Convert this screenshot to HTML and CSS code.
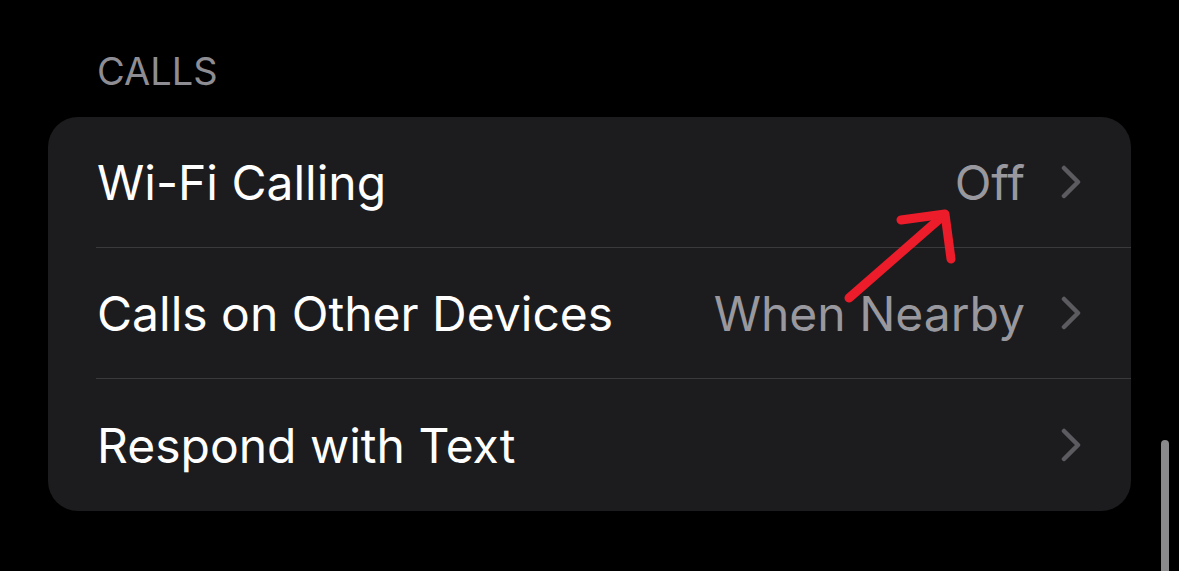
FILE: index.html
```html
<!DOCTYPE html>
<html lang="en">
<head>
  <meta charset="UTF-8" />
  <title>Phone — Calls</title>
  <link rel="stylesheet" href="styles.css">
</head>
<body>

<div class="screen">
  <div class="section-title">CALLS</div>

  <div class="group">
    <div class="row">
      <div class="row-inner">
        <span class="label">Wi-Fi Calling</span>
        <span class="value">Off</span>
        <svg class="chevron" viewBox="0 0 20 34"><path d="M3 3 L17 17 L3 31" /></svg>
      </div>
    </div>
    <div class="row">
      <div class="row-inner">
        <span class="label">Calls on Other Devices</span>
        <span class="value">When Nearby</span>
        <svg class="chevron" viewBox="0 0 20 34"><path d="M3 3 L17 17 L3 31" /></svg>
      </div>
    </div>
    <div class="row">
      <div class="row-inner">
        <span class="label">Respond with Text</span>
        <svg class="chevron" viewBox="0 0 20 34"><path d="M3 3 L17 17 L3 31" /></svg>
      </div>
    </div>
  </div>
</div>

<!-- annotation arrow pointing at "Off" -->
<svg class="arrow" viewBox="0 0 1179 571">
  <path d="M849 298 L944 215" />
  <path d="M901 220 L945 214 L951 259" />
</svg>

<div class="scrollbar"></div>

</body>
</html>
```

FILE: styles.css
```css
html, body {
  margin: 0;
  padding: 0;
  overflow: hidden;
  background: #000;
  font-family: Inter, "Noto Sans", sans-serif;
}
.screen {
  width: 1179px;
  height: 571px;
  padding: 0 48px;
  box-sizing: border-box;
}
.section-title {
  padding: 51px 0 0 49px;
  height: 117px;
  box-sizing: border-box;
  font-size: 38px;
  line-height: 40px;
  color: #8d8d93;
}
.group {
  background: #1c1c1e;
  border-radius: 30px;
  overflow: hidden;
}
.row {
  padding-left: 48px;
}
.row-inner {
  display: flex;
  align-items: center;
  height: 130px;
  padding-right: 50px;
  border-bottom: 1px solid #3a3a3c;
}
.row:last-child .row-inner {
  height: 132px;
  border-bottom: none;
}
.label {
  flex: 1;
  font-size: 48px;
  color: #fff;
  padding-left: 1px;
}
.value {
  font-size: 48px;
  color: #98989e;
  margin-right: 36px;
}
.chevron {
  width: 20px;
  height: 34px;
  fill: none;
  stroke: #5b5b60;
  stroke-width: 4.5;
  stroke-linecap: round;
  stroke-linejoin: round;
}
.arrow {
  position: absolute;
  top: 0;
  left: 0;
  width: 1179px;
  height: 571px;
  fill: none;
  stroke: #ec1c2a;
  stroke-width: 9;
  stroke-linecap: round;
  stroke-linejoin: round;
}
.scrollbar {
  position: absolute;
  left: 1161px;
  top: 440px;
  width: 8px;
  height: 140px;
  border-radius: 4px;
  background: #8a8a8c;
}
```
